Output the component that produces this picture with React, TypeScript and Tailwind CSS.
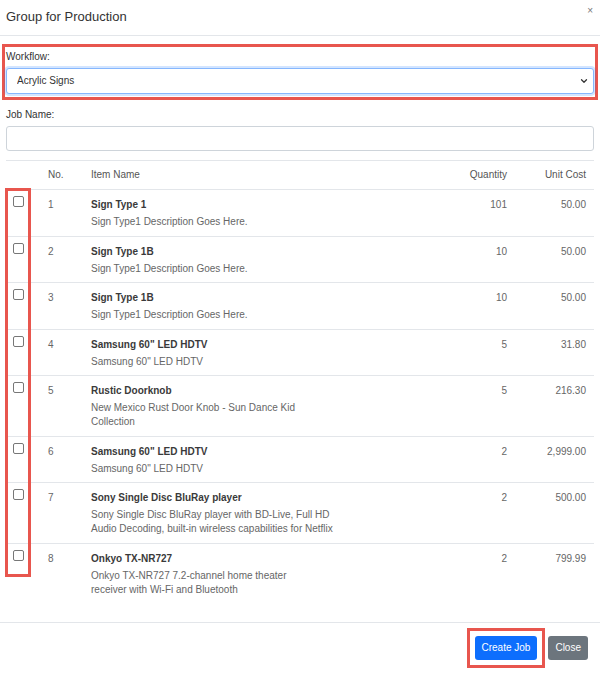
import React from 'react';
import { ChevronDown } from 'lucide-react';

interface LineItem {
  no: number;
  name: string;
  desc: string[];
  qty: string;
  cost: string;
}

const items: LineItem[] = [
  { no: 1, name: 'Sign Type 1', desc: ['Sign Type1 Description Goes Here.'], qty: '101', cost: '50.00' },
  { no: 2, name: 'Sign Type 1B', desc: ['Sign Type1 Description Goes Here.'], qty: '10', cost: '50.00' },
  { no: 3, name: 'Sign Type 1B', desc: ['Sign Type1 Description Goes Here.'], qty: '10', cost: '50.00' },
  { no: 4, name: 'Samsung 60" LED HDTV', desc: ['Samsung 60" LED HDTV'], qty: '5', cost: '31.80' },
  {
    no: 5,
    name: 'Rustic Doorknob',
    desc: ['New Mexico Rust Door Knob - Sun Dance Kid', 'Collection'],
    qty: '5',
    cost: '216.30',
  },
  { no: 6, name: 'Samsung 60" LED HDTV', desc: ['Samsung 60" LED HDTV'], qty: '2', cost: '2,999.00' },
  {
    no: 7,
    name: 'Sony Single Disc BluRay player',
    desc: ['Sony Single Disc BluRay player with BD-Live, Full HD', 'Audio Decoding, built-in wireless capabilities for Netflix'],
    qty: '2',
    cost: '500.00',
  },
  {
    no: 8,
    name: 'Onkyo TX-NR727',
    desc: ['Onkyo TX-NR727 7.2-channel home theater', 'receiver with Wi-Fi and Bluetooth'],
    qty: '2',
    cost: '799.99',
  },
];

export default function App() {
  return (
    <div className="w-[600px] h-[673px] bg-white font-['Liberation_Sans',Arial,sans-serif] text-[10px] leading-[14px] text-[#333] overflow-hidden">
      {/* Header */}
      <div className="h-[36px] flex items-start justify-between border-b border-[#e3e6ea] pl-[6px] pr-[7px]">
        <h3 className="mt-[9px] text-[13px] leading-[16px] text-[#333]">Group for Production</h3>
        <button className="mt-[4px] text-[10px] leading-[14px] text-[#777]">×</button>
      </div>

      <div className="px-[6px]">
        {/* Workflow (highlighted) */}
        <div className="-mx-[4px] mt-[8px] border-[3px] border-[#e8564e] pl-[1px] pr-[1px] pt-[3px] pb-[3px]">
          <label className="block mb-[4px]">Workflow:</label>
          <div className="relative">
            <select
              defaultValue="acrylic"
              className="block w-full h-[26px] appearance-none rounded-[3px] border border-[#86b7fe] bg-white pl-[10px] text-[10px] text-[#333] shadow-[0_0_0_2px_rgba(13,110,253,0.18)] outline-none"
            >
              <option value="acrylic">Acrylic Signs</option>
            </select>
            <ChevronDown className="absolute right-[5px] top-[8px] h-[10px] w-[10px] text-[#333] pointer-events-none" strokeWidth={3} />
          </div>
        </div>

        {/* Job name */}
        <label className="block mt-[8px] mb-[4px]">Job Name:</label>
        <input className="block w-full h-[25px] rounded-[3px] border border-[#ced4da] bg-white outline-none" />

        {/* Items */}
        <div className="relative mt-[9px]">
          <table className="w-full table-fixed border-collapse">
            <colgroup>
              <col className="w-[35px]" />
              <col className="w-[43px]" />
              <col className="w-[256px]" />
              <col />
              <col className="w-[80px]" />
            </colgroup>
            <thead>
              <tr className="h-[29px] border-t border-[#e3e6ea] text-[#555]">
                <th className="font-normal"></th>
                <th className="pl-[7px] text-left font-normal">No.</th>
                <th className="pl-[7px] text-left font-normal">Item Name</th>
                <th className="pr-[7px] text-right font-normal">Quantity</th>
                <th className="pr-[8px] text-right font-normal">Unit Cost</th>
              </tr>
            </thead>
            <tbody>
              {items.map((item) => (
                <tr key={item.no} className="border-t border-[#e3e6ea] align-top">
                  <td className="pl-[7px] pt-[6px]">
                    <input type="checkbox" className="block h-[11px] w-[11px] appearance-none rounded-[2px] border border-[#777] bg-white" />
                  </td>
                  <td className="pl-[7px] pt-[8px] text-[#666]">{item.no}</td>
                  <td className="pl-[7px] pt-[8px] pb-[6.5px]">
                    <div className="font-bold text-[#3a3a3a]">{item.name}</div>
                    <div className="mt-[3px] text-[#666]">
                      {item.desc.map((line) => (
                        <div key={line}>{line}</div>
                      ))}
                    </div>
                  </td>
                  <td className="pr-[7px] pt-[8px] text-right text-[#666]">{item.qty}</td>
                  <td className="pr-[8px] pt-[8px] text-right text-[#666]">{item.cost}</td>
                </tr>
              ))}
            </tbody>
          </table>
          {/* highlight around checkbox column */}
          <div className="absolute left-[-1px] top-[28px] h-[389px] w-[26px] border-[3px] border-[#e8564e] pointer-events-none" />
        </div>
      </div>

      {/* Footer */}
      <div className="mt-[19px] border-t border-[#e3e6ea] flex justify-end items-start gap-[3px] pr-[12px] pt-[5px]">
        <div className="border-[3px] border-[#e8564e] px-[5px] py-[5px]">
          <button className="h-[24px] rounded-[3px] bg-[#0d6efd] px-[7px] text-[10px] text-white">Create Job</button>
        </div>
        <button className="mt-[8px] h-[24px] rounded-[3px] bg-[#6c757d] px-[7px] text-[10px] text-white">Close</button>
      </div>
    </div>
  );
}
